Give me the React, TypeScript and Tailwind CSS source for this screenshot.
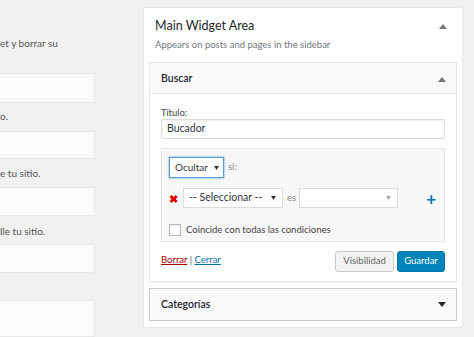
const font = { fontFamily: 'Lato, "Noto Sans", sans-serif' };

function Caret({ up }: { up?: boolean }) {
  return (
    <svg width="8" height="5" viewBox="0 0 8 5" className={up ? '' : 'rotate-180'}>
      <path d="M0 5 L4 0 L8 5 Z" fill={up ? '#72777c' : '#23282d'} />
    </svg>
  );
}

function TinyCaret({ color = '#32373c' }: { color?: string }) {
  return (
    <svg width="5" height="4" viewBox="0 0 5 4">
      <path d="M0 0 L5 0 L2.5 4 Z" fill={color} />
    </svg>
  );
}

export default function App() {
  return (
    <div className="w-[474px] h-[337px] bg-[#f1f1f1] overflow-hidden flex text-[#444] text-[10px]" style={font}>
      {/* LEFT COLUMN (cropped) */}
      <div className="w-[143px] shrink-0 flex flex-col">
        <p className="mt-[36px] h-[14px] leading-[14px] text-[#555]">et y borrar su</p>
        <div className="mt-[23px] w-[95px] h-[32px] bg-[#fbfbfb] border border-[#e8e8e8] border-l-0" />
        <p className="mt-[6px] h-[14px] leading-[14px] text-[#555]">o.</p>
        <div className="mt-[8px] w-[95px] h-[31px] bg-[#fbfbfb] border border-[#e8e8e8] border-l-0" />
        <p className="mt-[7px] h-[14px] leading-[14px] text-[#555]">e tu sitio.</p>
        <div className="mt-[7px] w-[95px] h-[31px] bg-[#fbfbfb] border border-[#e8e8e8] border-l-0" />
        <p className="mt-[8px] h-[14px] leading-[14px] text-[#555]">lle tu sitio.</p>
        <div className="mt-[6px] w-[95px] h-[31px] bg-[#fbfbfb] border border-[#e8e8e8] border-l-0" />
        <div className="mt-[27px] w-[95px] h-[40px] bg-[#fbfbfb] border border-[#e8e8e8] border-l-0" />
      </div>

      {/* RIGHT PANEL */}
      <div className="mt-[7px] w-[320px] h-[321px] bg-white border border-[#e8e8e8] px-[5px] flex flex-col">
        <div className="flex items-center justify-between pl-[6px] pr-[10px] pt-[10px]">
          <h2 className="text-[12.5px] leading-[16px] text-[#23282d]">Main Widget Area</h2>
          <Caret up />
        </div>
        <p className="pl-[6px] mt-[4px] text-[9.5px] leading-[14px] text-[#72777c]">Appears on posts and pages in the sidebar</p>

        {/* Buscar widget */}
        <div className="mt-[10px] border border-[#e5e5e5] shadow-[0_1px_1px_rgba(0,0,0,0.04)]">
          <div className="h-[31px] bg-[#fafafa] flex items-center justify-between pl-[11px] pr-[10px] pt-[2px] border-b border-[#e5e5e5]">
            <span className="text-[10.5px] font-semibold text-[#23282d]">Buscar</span>
            <Caret up />
          </div>
          <div className="bg-white px-[11px] pt-[13px] pb-[9px]">
            <label className="block text-[9.5px] leading-[12px] text-[#444]">Título:</label>
            <div className="h-[20px] border border-[#ddd] shadow-[inset_0_1px_2px_rgba(0,0,0,0.07)] flex items-center px-[5px] text-[10.5px] text-[#32373c]">
              Bucador
            </div>

            <div className="mt-[9px] h-[94px] bg-[#f7f7f7] border border-[#e5e5e5] pl-[7px] pr-[6px] pt-[8px]">
              <div className="flex items-center gap-[4px]">
                <div className="w-[55px] h-[21px] bg-white border border-[#5b9dd9] shadow-[0_0_2px_rgba(30,140,190,0.8)] flex items-center justify-between pl-[5px] pr-[4px]">
                  <span className="text-[10px] text-[#32373c]">Ocultar</span>
                  <TinyCaret />
                </div>
                <span className="text-[#888] text-[9.5px]">si:</span>
              </div>
              <div className="mt-[10px] flex items-center">
                <span className="w-[14px] text-[#d00] text-[11px] font-bold leading-none">✖</span>
                <div className="w-[100px] h-[20px] bg-white border border-[#ddd] flex items-center justify-between pl-[5px] pr-[6px]">
                  <span className="text-[10.5px] text-[#32373c]">-- Seleccionar --</span>
                  <TinyCaret />
                </div>
                <span className="ml-[4px] w-[12px] text-[9.5px] text-[#888]">es</span>
                <div className="w-[99px] h-[20px] bg-white border border-[#ddd] flex items-center justify-end pr-[6px]">
                  <TinyCaret color="#aaa" />
                </div>
                <span className="ml-auto mr-[2px] text-[#0073aa] text-[17px] font-bold leading-none">+</span>
              </div>
              <div className="mt-[15px] flex items-center gap-[5px]">
                <span className="w-[12px] h-[12px] bg-white border border-[#b4b9be] shadow-[inset_0_1px_2px_rgba(0,0,0,0.1)]" />
                <span className="text-[9.5px] text-[#444]">Coincide con todas las condiciones</span>
              </div>
            </div>

            <div className="mt-[9px] flex items-start justify-between">
              <div className="mt-[2px] text-[9.5px]">
                <a className="text-[#a00] underline">Borrar</a>
                <span className="text-[#666]"> | </span>
                <a className="text-[#0073aa] underline">Cerrar</a>
              </div>
              <div className="flex gap-[3px]">
                <button className="w-[59px] h-[21px] bg-[#f3f3f3] border border-[#c8c8c8] rounded-[3px] text-[9.5px] text-[#666]">Visibilidad</button>
                <button className="w-[48px] h-[21px] bg-[#0085ba] border border-[#0073aa] rounded-[3px] text-[9.5px] text-white">Guardar</button>
              </div>
            </div>
          </div>
        </div>

        {/* Categorías */}
        <div className="mt-[6px] h-[33px] bg-[#fafafa] border border-[#c8c8c8] flex items-center justify-between pl-[11px] pr-[10px]">
          <span className="text-[10.5px] font-semibold text-[#23282d]">Categorías</span>
          <Caret />
        </div>
      </div>
    </div>
  );
}
